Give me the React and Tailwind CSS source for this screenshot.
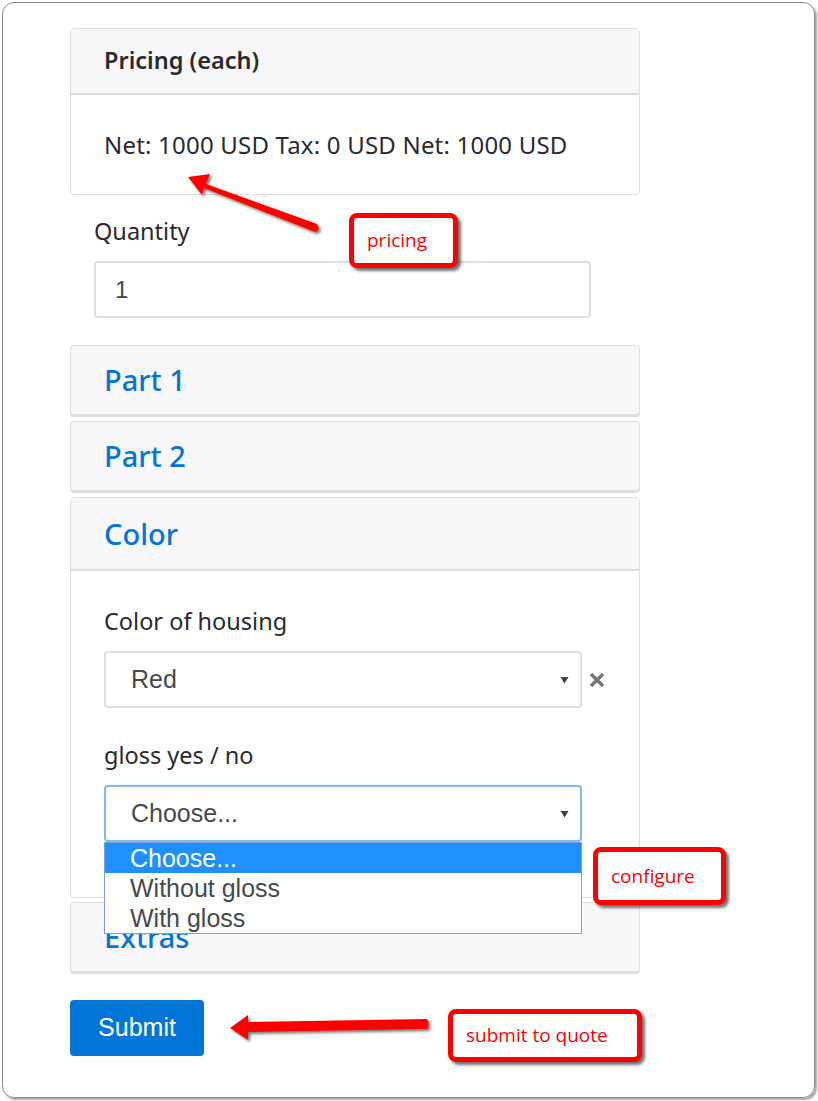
import React from 'react';

const bs = { fontFamily: '"Noto Sans", "Open Sans", sans-serif' };
const ar = { fontFamily: '"Liberation Sans", Arial, sans-serif' };
const note = { fontFamily: '"Open Sans", "Noto Sans", sans-serif' };

const Caret = () => (
  <svg width="9" height="8" viewBox="0 0 9 8" className="absolute right-[11px] top-1/2 -translate-y-1/2">
    <path d="M0.5 1 L8.5 1 L4.5 7.5 Z" fill="#444" />
  </svg>
);

const CollapsedCard = ({ title }) => (
  <div className="rounded-[4px] border border-[#dedede] border-b-[3px] bg-[#f7f7f9]">
    <div className="flex h-[68px] items-center px-[33px] text-[29px] font-medium text-[#0275d8]" style={bs}>
      {title}
    </div>
  </div>
);

const Note = ({ className, children }) => (
  <div
    className={`absolute flex items-center rounded-[8px] border-[5px] border-[#ff0000] bg-white pl-[13px] text-[19px] text-[#ff0000] shadow-[3px_3px_3px_rgba(0,0,0,0.55)] ${className}`}
    style={note}
  >
    {children}
  </div>
);

export default function App() {
  return (
    <div className="relative h-[1101px] w-[818px] bg-white">
      <div className="absolute left-[2px] top-[2px] h-[1096px] w-[813px] rounded-[12px] border border-[#8a8a8a] shadow-[2px_2px_2px_rgba(0,0,0,0.35)]" />

      <div className="relative pl-[70px] pt-[28px]">
        <div className="flex w-[570px] flex-col">
          {/* pricing */}
          <div className="rounded-[4px] border border-[#dedede]">
            <div className="flex h-[66px] items-center border-b-2 border-[#dadada] bg-[#f7f7f9] px-[33px] text-[23.5px] font-semibold text-[#292b2c]" style={bs}>
              Pricing (each)
            </div>
            <div className="flex h-[99px] items-center px-[33px] text-[24px] tracking-[0.2px] text-[#292b2c]" style={bs}>
              Net: 1000 USD Tax: 0 USD Net: 1000 USD
            </div>
          </div>

          {/* quantity */}
          <div className="flex flex-col gap-[14px] px-[24px] pt-[20px]">
            <div className="text-[23.5px] leading-[32px] text-[#292b2c]" style={bs}>Quantity</div>
            <div className="flex h-[57px] w-[497px] items-center rounded-[4px] border-2 border-[#dedede] px-[19px] text-[24px] text-[#464a4c]" style={ar}>
              1
            </div>
          </div>

          <div className="mt-[27px] flex flex-col gap-[4px]">
            <CollapsedCard title="Part 1" />
            <CollapsedCard title="Part 2" />

            {/* color */}
            <div className="relative rounded-[4px] border border-[#dedede]">
              <div className="flex h-[73px] items-center border-b-2 border-[#dadada] bg-[#f7f7f9] px-[33px] text-[29px] font-medium text-[#0275d8]" style={bs}>
                Color
              </div>
              <div className="flex flex-col px-[33px] pb-[55px] pt-[34px]">
                <div className="text-[23.5px] leading-[32px] text-[#292b2c]" style={bs}>Color of housing</div>
                <div className="mt-[14px] flex items-center gap-[6px]">
                  <div className="relative flex h-[57px] w-[478px] items-center rounded-[4px] border-2 border-[#dedede] px-[25px] text-[25px] text-[#464a4c]" style={ar}>
                    Red
                    <Caret />
                  </div>
                  <svg width="18" height="18" viewBox="0 0 18 18">
                    <path d="M3 3 L15 15 M15 3 L3 15" stroke="#777" strokeWidth="3.6" strokeLinecap="butt" />
                  </svg>
                </div>

                <div className="mt-[31px] text-[23.5px] leading-[32px] text-[#292b2c]" style={bs}>gloss yes / no</div>
                <div className="relative mt-[14px] w-[478px]">
                  <div className="relative flex h-[57px] items-center rounded-[4px] border-2 border-[#7fb9f0] px-[25px] text-[25px] text-[#464a4c]" style={ar}>
                    Choose...
                    <Caret />
                  </div>
                  {/* open select list */}
                  <div className="absolute left-0 top-[57px] z-10 flex w-[478px] flex-col border border-[#7c9fd8] bg-white text-[25px] leading-[30px] text-[#464a4c]" style={ar}>
                    <div className="bg-[#1e90ff] px-[25px] text-white">Choose...</div>
                    <div className="px-[25px]">Without gloss</div>
                    <div className="px-[25px]">With gloss</div>
                  </div>
                </div>
              </div>
            </div>

            <CollapsedCard title="Extras" />
          </div>

          <button className="mt-[26px] h-[56px] w-[134px] rounded-[4px] bg-[#0275d8] text-[25px] text-white" style={ar}>
            Submit
          </button>
        </div>
      </div>

      {/* annotations */}
      <svg className="pointer-events-none absolute left-0 top-0" width="818" height="1101">
        <defs>
          <filter id="sh" x="-20%" y="-20%" width="140%" height="140%">
            <feDropShadow dx="2" dy="2" stdDeviation="1.5" floodColor="#000" floodOpacity="0.55" />
          </filter>
        </defs>
        <g filter="url(#sh)" fill="#ff0000">
          <path d="M317 224 L206 184 L210 174 L188 177 L202 195 L204 188 L315 232 Q321 230 317 224 Z" />
          <path d="M427 1019 L248 1022 L248 1015 L230 1028 L248 1040 L248 1032 L427 1029 Q430 1024 427 1019 Z" />
        </g>
      </svg>
      <Note className="left-[349px] top-[213px] h-[55px] w-[109px]">pricing</Note>
      <Note className="left-[593px] top-[847px] h-[58px] w-[133px]">configure</Note>
      <Note className="left-[448px] top-[1009px] h-[53px] w-[194px]">submit to quote</Note>
    </div>
  );
}
